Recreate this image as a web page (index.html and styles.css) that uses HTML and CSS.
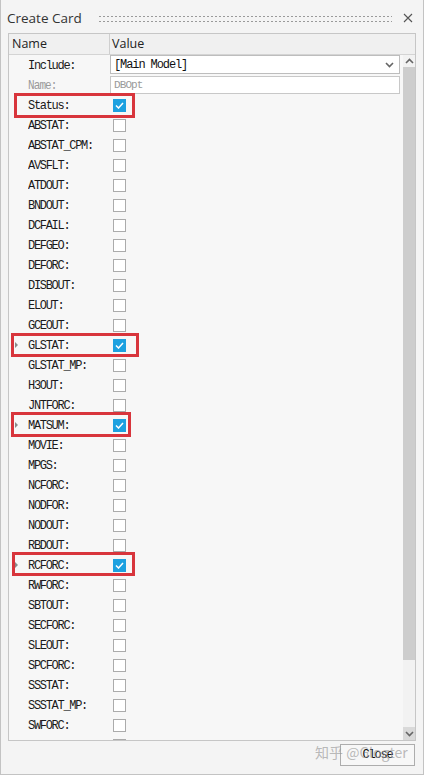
FILE: index.html
```html
<!DOCTYPE html>
<html>
<head>
<meta charset="utf-8">
<link rel="stylesheet" href="styles.css">
</head>
<body>
<div class="window">
  <div class="titlebar">
    <span class="title">Create Card</span>
    <span class="grip"></span>
    <svg class="xbtn" width="10" height="10" viewBox="0 0 10 10"><path d="M1 1L9 9M9 1L1 9" stroke="#555" stroke-width="1.1" fill="none"/></svg>
  </div>
  <div class="grid">
    <div class="ghead">
      <div class="hname">Name</div>
      <div class="hvalue">Value</div>
    </div>
    <div class="gbody">
      <div class="rows">
        <div class="row"><div class="ncell"><span class="tw"></span><span class="lbl">Include:</span></div><div class="vcell"><div class="combo"><span>[Main Model]</span><svg width="9" height="6" viewBox="0 0 9 6"><path d="M1 1L4.5 4.5L8 1" stroke="#666" stroke-width="1.6" fill="none"/></svg></div></div></div>
        <div class="row"><div class="ncell"><span class="tw"></span><span class="lbl dim">Name:</span></div><div class="vcell"><div class="field">DBOpt</div></div></div>
        <div class="row"><div class="ncell"><span class="tw"></span><span class="lbl">Status:</span></div><div class="vcell"><span class="cb on"><svg width="9" height="7" viewBox="0 0 9 7"><path d="M1 3.5L3.5 6L8 1" stroke="#fff" stroke-width="1.5" fill="none"/></svg></span></div><span class="mark m-status"></span></div>
        <div class="row"><div class="ncell"><span class="tw"></span><span class="lbl">ABSTAT:</span></div><div class="vcell"><span class="cb"></span></div></div>
        <div class="row"><div class="ncell"><span class="tw"></span><span class="lbl">ABSTAT_CPM:</span></div><div class="vcell"><span class="cb"></span></div></div>
        <div class="row"><div class="ncell"><span class="tw"></span><span class="lbl">AVSFLT:</span></div><div class="vcell"><span class="cb"></span></div></div>
        <div class="row"><div class="ncell"><span class="tw"></span><span class="lbl">ATDOUT:</span></div><div class="vcell"><span class="cb"></span></div></div>
        <div class="row"><div class="ncell"><span class="tw"></span><span class="lbl">BNDOUT:</span></div><div class="vcell"><span class="cb"></span></div></div>
        <div class="row"><div class="ncell"><span class="tw"></span><span class="lbl">DCFAIL:</span></div><div class="vcell"><span class="cb"></span></div></div>
        <div class="row"><div class="ncell"><span class="tw"></span><span class="lbl">DEFGEO:</span></div><div class="vcell"><span class="cb"></span></div></div>
        <div class="row"><div class="ncell"><span class="tw"></span><span class="lbl">DEFORC:</span></div><div class="vcell"><span class="cb"></span></div></div>
        <div class="row"><div class="ncell"><span class="tw"></span><span class="lbl">DISBOUT:</span></div><div class="vcell"><span class="cb"></span></div></div>
        <div class="row"><div class="ncell"><span class="tw"></span><span class="lbl">ELOUT:</span></div><div class="vcell"><span class="cb"></span></div></div>
        <div class="row"><div class="ncell"><span class="tw"></span><span class="lbl">GCEOUT:</span></div><div class="vcell"><span class="cb"></span></div></div>
        <div class="row"><div class="ncell"><span class="tw"><i class="tri"></i></span><span class="lbl">GLSTAT:</span></div><div class="vcell"><span class="cb on"><svg width="9" height="7" viewBox="0 0 9 7"><path d="M1 3.5L3.5 6L8 1" stroke="#fff" stroke-width="1.5" fill="none"/></svg></span></div><span class="mark m-glstat"></span></div>
        <div class="row"><div class="ncell"><span class="tw"></span><span class="lbl">GLSTAT_MP:</span></div><div class="vcell"><span class="cb"></span></div></div>
        <div class="row"><div class="ncell"><span class="tw"></span><span class="lbl">H3OUT:</span></div><div class="vcell"><span class="cb"></span></div></div>
        <div class="row"><div class="ncell"><span class="tw"></span><span class="lbl">JNTFORC:</span></div><div class="vcell"><span class="cb"></span></div></div>
        <div class="row"><div class="ncell"><span class="tw"><i class="tri"></i></span><span class="lbl">MATSUM:</span></div><div class="vcell"><span class="cb on"><svg width="9" height="7" viewBox="0 0 9 7"><path d="M1 3.5L3.5 6L8 1" stroke="#fff" stroke-width="1.5" fill="none"/></svg></span></div><span class="mark m-matsum"></span></div>
        <div class="row"><div class="ncell"><span class="tw"></span><span class="lbl">MOVIE:</span></div><div class="vcell"><span class="cb"></span></div></div>
        <div class="row"><div class="ncell"><span class="tw"></span><span class="lbl">MPGS:</span></div><div class="vcell"><span class="cb"></span></div></div>
        <div class="row"><div class="ncell"><span class="tw"></span><span class="lbl">NCFORC:</span></div><div class="vcell"><span class="cb"></span></div></div>
        <div class="row"><div class="ncell"><span class="tw"></span><span class="lbl">NODFOR:</span></div><div class="vcell"><span class="cb"></span></div></div>
        <div class="row"><div class="ncell"><span class="tw"></span><span class="lbl">NODOUT:</span></div><div class="vcell"><span class="cb"></span></div></div>
        <div class="row"><div class="ncell"><span class="tw"></span><span class="lbl">RBDOUT:</span></div><div class="vcell"><span class="cb"></span></div></div>
        <div class="row"><div class="ncell"><span class="tw"><i class="tri"></i></span><span class="lbl">RCFORC:</span></div><div class="vcell"><span class="cb on"><svg width="9" height="7" viewBox="0 0 9 7"><path d="M1 3.5L3.5 6L8 1" stroke="#fff" stroke-width="1.5" fill="none"/></svg></span></div><span class="mark m-rcforc"></span></div>
        <div class="row"><div class="ncell"><span class="tw"></span><span class="lbl">RWFORC:</span></div><div class="vcell"><span class="cb"></span></div></div>
        <div class="row"><div class="ncell"><span class="tw"></span><span class="lbl">SBTOUT:</span></div><div class="vcell"><span class="cb"></span></div></div>
        <div class="row"><div class="ncell"><span class="tw"></span><span class="lbl">SECFORC:</span></div><div class="vcell"><span class="cb"></span></div></div>
        <div class="row"><div class="ncell"><span class="tw"></span><span class="lbl">SLEOUT:</span></div><div class="vcell"><span class="cb"></span></div></div>
        <div class="row"><div class="ncell"><span class="tw"></span><span class="lbl">SPCFORC:</span></div><div class="vcell"><span class="cb"></span></div></div>
        <div class="row"><div class="ncell"><span class="tw"></span><span class="lbl">SSSTAT:</span></div><div class="vcell"><span class="cb"></span></div></div>
        <div class="row"><div class="ncell"><span class="tw"></span><span class="lbl">SSSTAT_MP:</span></div><div class="vcell"><span class="cb"></span></div></div>
        <div class="row"><div class="ncell"><span class="tw"></span><span class="lbl">SWFORC:</span></div><div class="vcell"><span class="cb"></span></div></div>
        <div class="row"><div class="ncell"><span class="tw"></span></div><div class="vcell"><span class="cb"></span></div></div>
      </div>
      <div class="sbar">
        <div class="sb-up"><svg width="9" height="6" viewBox="0 0 9 6"><path d="M1 5L4.5 1.5L8 5" stroke="#666" stroke-width="1.6" fill="none"/></svg></div>
        <div class="sb-thumb"></div>
        <div class="sb-track"></div>
        <div class="sb-down"><svg width="9" height="6" viewBox="0 0 9 6"><path d="M1 1L4.5 4.5L8 1" stroke="#666" stroke-width="1.6" fill="none"/></svg></div>
      </div>
    </div>
  </div>
  <div class="footer">
    <div class="btn">Close</div>
    <span class="wm">知乎 @Glogter</span>
  </div>
</div>
</body>
</html>
```

FILE: styles.css
```css
* { box-sizing: border-box; }
html, body { margin: 0; padding: 0; }
body {
  width: 424px;
  height: 775px;
  background: #f4f4f4;
  font-family: "Open Sans", "Liberation Sans", sans-serif;
  overflow: hidden;
}
.window {
  width: 424px;
  height: 775px;
  border-left: 1px solid #c3c3c3;
  border-right: 1px solid #c3c3c3;
  border-bottom: 1px solid #c3c3c3;
  background: #f4f4f4;
  display: flex;
  flex-direction: column;
}
.titlebar {
  height: 33px;
  display: flex;
  align-items: center;
  padding: 3px 10px 0 6px;
}
.title {
  font-size: 13.5px;
  color: #333;
}
.grip {
  flex: 1;
  height: 8px;
  margin: 0 11px 0 16px;
  background-image: radial-gradient(circle, #9a9a9a 0.8px, transparent 1.1px);
  background-size: 4px 5px;
  background-position: 0 0;
}
.xbtn { display: block; }
.grid {
  margin-left: 7px;
  width: 408px;
  border: 1px solid #c6c6c6;
  background: #f7f7f7;
}
.ghead {
  height: 21px;
  display: flex;
  background: #f0f0f0;
  border-bottom: 1px solid #d4d4d4;
  font-size: 12.5px;
  color: #222;
  line-height: 20px;
}
.hname {
  width: 101px;
  padding-left: 3px;
  border-right: 1px solid #cfcfcf;
}
.hvalue { padding-left: 2px; }
.gbody {
  height: 685px;
  display: flex;
  overflow: hidden;
}
.rows {
  flex: 1;
  overflow: hidden;
}
.row {
  height: 20px;
  display: flex;
  position: relative;
}
.ncell {
  width: 101px;
  display: flex;
  align-items: center;
  padding-left: 6px;
}
.tw {
  width: 13px;
  height: 20px;
  display: flex;
  align-items: center;
}
.tri {
  display: block;
  width: 0;
  height: 0;
  border-left: 3px solid #8a8a8a;
  border-top: 3px solid transparent;
  border-bottom: 3px solid transparent;
}
.lbl {
  font-family: "Liberation Mono", monospace;
  font-size: 12px;
  letter-spacing: -1.3px;
  color: #1a1a1a;
  transform: scaleY(1.12);
  padding-top: 2px;
}
.lbl.dim {
  color: #9a9a9a;
  font-size: 11px;
  letter-spacing: -0.9px;
}
.vcell {
  flex: 1;
  display: flex;
  align-items: center;
}
.combo {
  width: 290px;
  height: 19px;
  align-self: flex-start;
  background: #fff;
  border: 1px solid #bdbdbd;
  display: flex;
  align-items: center;
  justify-content: space-between;
  padding: 0 5px 0 3px;
  font-family: "Liberation Mono", monospace;
  font-size: 12px;
  letter-spacing: -1.1px;
  color: #111;
}
.field {
  width: 290px;
  height: 18px;
  background: #fff;
  border: 1px solid #c8c8c8;
  display: flex;
  align-items: center;
  padding-left: 3px;
  font-family: "Liberation Mono", monospace;
  font-size: 11px;
  letter-spacing: -0.9px;
  color: #9a9a9a;
}
.cb {
  width: 13px;
  height: 13px;
  margin-left: 3px;
  border: 1px solid #ababab;
  background: #fff;
  display: flex;
  align-items: center;
  justify-content: center;
}
.cb.on {
  background: #1da1e0;
  border-color: #1da1e0;
}
.cb svg { display: block; }
.mark {
  position: absolute;
  border: 3px solid #d8353c;
  pointer-events: none;
}
.m-status { left: 5px; width: 121px; top: -2px; height: 25px; }
.m-glstat { left: 2px; width: 128px; top: -2px; height: 24px; }
.m-matsum { left: 2px; width: 120px; top: -3px; height: 25px; }
.m-rcforc { left: 3px; width: 123px; top: -3px; height: 24px; }
.sbar {
  width: 12px;
  display: flex;
  flex-direction: column;
  background: #f2f2f2;
}
.sb-up {
  height: 12px;
  display: flex;
  align-items: center;
  justify-content: center;
}
.sb-thumb {
  height: 593px;
  background: #cdcdcd;
}
.sb-track { flex: 1; }
.sb-down {
  height: 13px;
  background: #d9d9d9;
  display: flex;
  align-items: center;
  justify-content: center;
}
.sb-up svg, .sb-down svg { display: block; }
.footer {
  flex: 1;
  display: flex;
  justify-content: flex-end;
  align-items: flex-start;
  padding: 3px 8px 0 0;
  position: relative;
}
.btn {
  width: 75px;
  height: 22px;
  border: 1px solid #adadad;
  background: #f7f7f7;
  display: flex;
  align-items: center;
  justify-content: center;
  font-family: "Liberation Mono", monospace;
  font-size: 12px;
  letter-spacing: -1.2px;
  color: #111;
}
.wm {
  position: absolute;
  left: 314px;
  top: 1px;
  font-family: "Noto Sans CJK SC", "Open Sans", sans-serif;
  font-size: 14px;
  color: rgba(150, 150, 150, 0.65);
  white-space: nowrap;
  pointer-events: none;
}
```
